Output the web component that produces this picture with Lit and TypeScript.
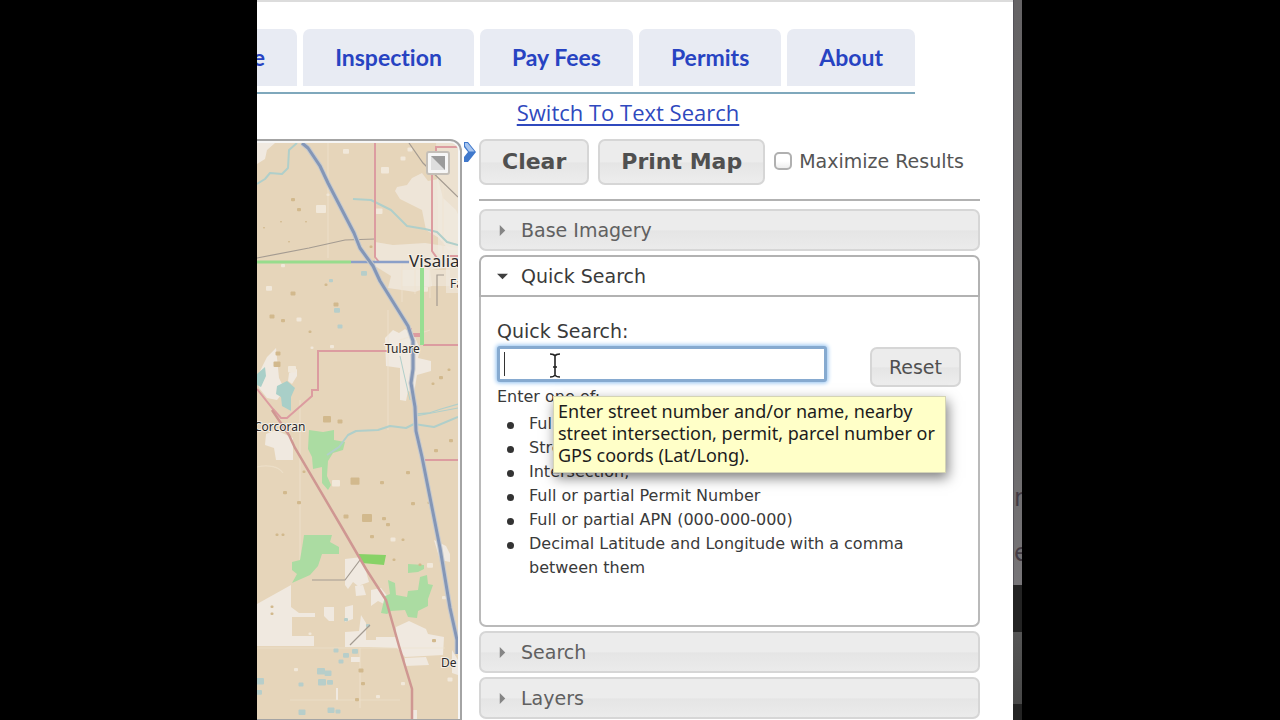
import { LitElement, html, svg, css } from "lit";
import { customElement, property, state } from "lit/decorators.js";

@customElement("county-map")
class CountyMap extends LitElement {
  static styles = css`
    :host {
      display: block;
      box-sizing: border-box;
      border: 2px solid #a4a4a4;
      border-left: 0;
      border-bottom-width: 1px;
      border-top-right-radius: 12px;
      padding: 2px 2px 0 0;
      background: #f6f6f6;
      position: relative;
      overflow: hidden;
    }
    .map {
      display: block;
      width: 100%;
      border-top-right-radius: 8px;
    }
    .label {
      font-family: "Noto Sans", "Open Sans", sans-serif;
      fill: #2c2a2a;
      stroke: #f5efe6;
      stroke-width: 2px;
      paint-order: stroke;
    }
    .big { font-size: 17px; }
    .small { font-size: 12px; }
    .toggle {
      position: absolute;
      top: 10px;
      right: 10px;
      width: 24px;
      height: 24px;
      padding: 0;
      display: grid;
      place-items: center;
      background: #f6f6f6;
      border: 2px solid #c4bfb8;
      border-radius: 3px;
    }
  `;

  private houses = [
    [293, 200, 4], [299, 210, 4], [293, 294, 5], [272, 317, 5], [283, 321, 4], [336, 305, 5], [310, 332, 3],
    [326, 285, 3], [281, 222, 2], [306, 222, 2], [289, 242, 2], [264, 228, 2], [371, 247, 3], [327, 420, 8],
    [340, 422, 5], [304, 472, 3], [355, 482, 9], [382, 483, 4], [408, 473, 4], [285, 493, 4], [299, 503, 4],
    [346, 517, 5], [367, 519, 10], [384, 519, 4], [388, 525, 4], [372, 537, 4], [403, 540, 3], [277, 535, 3],
    [283, 535, 3], [413, 504, 4], [429, 503, 3], [394, 560, 3], [436, 451, 4], [451, 441, 4], [441, 378, 4],
    [449, 370, 3], [433, 384, 3], [361, 671, 5], [363, 684, 4], [357, 700, 4], [272, 607, 3], [272, 614, 3],
    [434, 641, 4], [278, 354, 5], [277, 365, 7], [420, 565, 3],
  ];
  private specks = [
    [346, 152, 6], [321, 210, 10], [379, 212, 7], [385, 171, 8], [403, 159, 5], [328, 195, 3], [269, 289, 6],
    [299, 320, 5], [283, 266, 4], [292, 370, 8], [332, 347, 4], [312, 348, 3], [336, 484, 8], [393, 540, 5],
    [430, 566, 6], [444, 598, 4], [421, 605, 4], [403, 684, 4], [378, 697, 4], [450, 680, 5], [310, 634, 3],
    [296, 670, 4], [410, 150, 5], [425, 290, 6],
  ];
  private ponds = [
    [260, 682, 8], [259, 693, 6], [301, 685, 5], [321, 672, 8], [328, 674, 7], [322, 683, 8], [330, 683, 6],
    [302, 713, 7], [331, 711, 7], [338, 712, 5], [336, 651, 5], [346, 656, 6], [355, 652, 6], [341, 662, 5],
    [368, 626, 4], [346, 620, 4], [337, 311, 6], [340, 327, 5], [331, 281, 4], [364, 274, 6],
  ];

  private dots(items: number[][], fill: string) {
    return items.map(
      ([x, y, s]) => svg`<rect x=${x - s / 2} y=${y - s / 2} width=${s} height=${s * 0.8} rx="1" fill=${fill}></rect>`
    );
  }

  render() {
    return html`
      <svg class="map" viewBox="257 143 201 576" role="img" aria-label="Road map of Tulare County">
        <rect x="257" y="143" width="201" height="576" fill="#e6d5ba"></rect>
        <g fill="#f0e9e0">
          <path d="M257 143h18l-8 7-2 9-8 5z"></path>
          <path d="M397 187l10-2 5-7 10-5 6 8 10-2 5 19 13 12 7 15v25h-14l-10-12-13-8-4-20-12-6-10-5-5-8z" opacity=".8"></path>
          <path d="M436 143h22v150h-12v-34l-8-6v-40z" opacity=".6"></path>
          <path d="M375 242l18 3 32-2 33 5v18l-28 4 2 16-17 6-27-4 3-12-16-10z" opacity=".75"></path>
          <path d="M402 270h48v16h-48z" opacity=".6"></path>
          <path d="M385 338l8-8 6 3 6-4 9 6 6 14-2 9 13 3v10l-14 4-3 18-6-2-2 10-6-1v-32l-14-2z"></path>
          <path d="M257 377l10-20 9-9 3 30 6 12-8 10-10-2-8-10z"></path>
          <path d="M289 373l8-4v7l-5 8-4-3z"></path>
          <path d="M266 434l10-4 17 8v22h-17l-2-12-9-3z"></path>
          <path d="M257 604l34-19v22l8 6h16v4h-23v19h22v10h-57z"></path>
          <path d="M345 559l17-2 7 25-11 4-5-4-5 7-3-4zM355 586l8-1 3 10-10 1zM371 590l10-2 8 10-3 7-8-4-7 5zM324 607h10v14h-5l-5-5zM345 607l8-2v14l-8 3z"></path>
          <path d="M345 632l14-1 2-16 5 8v17h10v-3h20v-10l13-6 17 8 2 5 16 3-1 18-38 2-8-9-28-1h-24z"></path>
          <path d="M405 658l21-1 3 8-24 1zM351 657h9v5h-9zM336 688h2v12h-2zM413 710h4v9h-4z"></path>
          <path d="M434 540l12 6 4 8v8l-10-2zM452 650l6 10v15l-6-2z"></path>
        </g>
        ${this.dots(this.specks, "#f1e8da")}
        <path d="M257 467c12-3 22 0 26 6M328 143v115M316 648h129M300 400v170M360 648v60M388 310v120M402 262v40M415 264v30M430 260v38M443 180v80M290 700h110M257 648h150M400 340l30-10" fill="none" stroke="#f0e4d0" stroke-width="1.2" opacity=".6"></path>
        <g fill="#abdca2">
          <path d="M309 430l14 2 11-2v10l11 2-2 8-10 3-5 8-1 15 4 9-3 5-6-7v-16l-9 2-1-12-4-8z"></path>
          <path d="M304 535h28l-2 7 9 5v7h-17l-4 12-8 9-18 8 5-9-5-4v-8l8-2 3-18z"></path>
          <path d="M388 580l7 3 1 12 11 2 1-6 10-1 2-13 7-2 1 9 5 1-5 14v7l-10 5-1 7-9-1-3-7-14 1-4 3-6-1 4-17 5-2z"></path>
          <path d="M408 564l16 1v4l-6 3-10 1z"></path>
        </g>
        <path d="M358 554l28 1-2 10-22-2z" fill="#88d267"></path>
        <path d="M257 374l8-7 1 9-5 11-4-2zM277 386l10-5 8 7-4 9v14l-9-5-1-9-5-3z" fill="#a9cfc8"></path>
        ${this.dots(this.ponds, "#b7ceca")}
        ${this.dots(this.houses, "#d2b98d")}
        <g fill="none" stroke="#b0cfca" stroke-width="2" stroke-linejoin="round">
          <path d="M297 143l-8 7-1 18-6 6-12-1-5 6-8 5"></path>
          <path d="M353 199l18 1 20 10 16 16 18 3 12 3 10 10 11 3"></path>
          <path d="M327 455l12-8 9-12 8-4 22-1 12-4 16 2 8-4 20 3 24-10"></path>
          <path d="M417 414l12-1 12-4 17-5" stroke-width="1.3"></path>
          <path d="M400 356l4 18 6 26M458 408l-42 8" stroke-width="1"></path>
        </g>
        <path d="M257 258l52-10 36-8 30-1M409 143l14 20 35 34M437 306v-31h7M312 580h33l15-20M350 645l20-20" fill="none" stroke="#a49b91" stroke-width="1.2"></path>
        <g fill="none" stroke="#dc9ca0" stroke-width="2">
          <path d="M375 143v114l4 5M432 175v76l5 7M436 156v-9h22M458 256h-10M411 328v8h11M413 334h10M423 345h35M390 351h-72v39h-6v6l-25 22h-6l-8-9-16-20M424 460h34"></path>
        </g>
        <path d="M272 410l17 25 6 13 46 78 25 43 20 31 13 46 13 43v30" fill="none" stroke="#cf9792" stroke-width="2.5"></path>
        <path d="M257 262h94" stroke="#98dc8d" stroke-width="3"></path>
        <path d="M351 262h58" stroke="#8a9fc8" stroke-width="2.5"></path>
        <path d="M422 268v77" stroke="#98de92" stroke-width="4"></path>
        <g fill="none" stroke-linejoin="round">
          <path d="M302 143l6 5 12 18 8 17 26 50 6 15 13 18 7 15 28 45 5 15v28l-2 14 4 24 1 24 6 26 18 91 10 60 7 32v14" stroke="#c6cacf" stroke-width="5"></path>
          <path d="M302 143l6 5 12 18 8 17 26 50 6 15 13 18 7 15 28 45 5 15v28l-2 14 4 24 1 24 6 26 18 91 10 60 7 32v14" stroke="#8496b6" stroke-width="3"></path>
        </g>
        <text class="label big" x="409" y="267">Visalia</text>
        <text class="label small" x="450" y="288">Fa</text>
        <text class="label small" x="385" y="353">Tulare</text>
        <text class="label small" x="254" y="431">Corcoran</text>
        <text class="label small" x="441" y="667">De</text>
      </svg>
      <button class="toggle" aria-label="Toggle overview map">
        <svg width="16" height="16" viewBox="0 0 16 16">
          <rect x="1" y="1" width="14" height="14" fill="#dedede"></rect>
          <path d="M1 1h14v14z" fill="#9b9b9b"></path>
        </svg>
      </button>
    `;
  }
}

@customElement("accordion-section")
class AccordionSection extends LitElement {
  @property() heading = "";
  @property({ type: Boolean, reflect: true }) open = false;

  static styles = css`
    :host { display: block; }
    .head {
      box-sizing: border-box;
      width: 100%;
      height: 42px;
      display: flex;
      align-items: center;
      gap: 13px;
      padding: 0 16px;
      font: 19px/24px "DejaVu Sans", Verdana, sans-serif;
      color: #606060;
      text-align: left;
      border: 2px solid #d6d6d6;
      border-radius: 7px;
      background: linear-gradient(#ececec 0 50%, #e5e5e5 52%, #ebebeb);
    }
    .arrow { width: 11px; height: 11px; fill: #858585; }
    .open {
      color: #3a3a3a;
      background: #fff;
      border-color: #b2b2b2;
      border-radius: 7px 7px 0 0;
    }
    .open .arrow { fill: #3f3f3f; }
    .body {
      border: 2px solid #bababa;
      border-top: 0;
      border-radius: 0 0 7px 7px;
      padding: 22px 16px 45px;
    }
  `;

  render() {
    return html`
      <button class="head ${this.open ? "open" : ""}" aria-expanded=${this.open} @click=${() => (this.open = !this.open)}>
        <svg class="arrow" viewBox="0 0 12 12">
          <path d=${this.open ? "M0 3h12L6 9z" : "M3 0v12L9 6z"}></path>
        </svg>
        <span>${this.heading}</span>
      </button>
      ${this.open ? html`<div class="body"><slot></slot></div>` : ""}
    `;
  }
}

@customElement("app-root")
class AppRoot extends LitElement {
  @state() private tabs = ["Home", "Inspection", "Pay Fees", "Permits", "About"];

  static styles = css`
    :host {
      display: grid;
      grid-template-columns: 257fr 756fr 9fr 258fr;
      height: 100vh;
      overflow: hidden;
      background: #000;
      font: 19px/24px "DejaVu Sans", Verdana, sans-serif;
      color: #3a3a3a;
    }
    .page {
      grid-column: 2;
      min-width: 0;
      overflow: hidden;
      background: #fff;
      border-top: 2px solid #dcdcdc;
    }
    .behind {
      display: grid;
      grid-template-rows: 585fr 47fr 72fr 16fr;
      font-size: 24px;
      overflow: hidden;
    }
    .upper {
      display: flex;
      flex-direction: column;
      justify-content: flex-end;
      gap: 31px;
      padding-bottom: 20px;
      color: #443c44;
      background: linear-gradient(#656365, #6b696a 70%, #777578);
      border-left: 1px solid #55535a;
    }
    .upper span { height: 24px; white-space: nowrap; }
    .dark { background: #232323; }
    .mid { background: linear-gradient(#555, #484848); }
    .tabs {
      display: flex;
      justify-content: flex-end;
      gap: 6px;
      margin: 27px 98px 0 0;
      padding-bottom: 6px;
      border-bottom: 2px solid #7fa8bc;
    }
    .tab {
      flex: none;
      padding: 13px 32px 14px;
      font: bold 23px/30px Lato, "Trebuchet MS", sans-serif;
      font-variant-ligatures: none;
      color: #2743c2;
      text-decoration: none;
      background: #e8ebf3;
      border-radius: 7px 7px 0 0;
    }
    .switch {
      margin: 2px 14px 11px 0;
      text-align: center;
      font: 22px/32px "Open Sans", "Trebuchet MS", sans-serif;
    }
    .switch a {
      color: #2f49be;
      text-decoration-thickness: 2px;
      text-underline-offset: 3px;
    }
    .main {
      display: grid;
      grid-template-columns: 205fr 17px 501fr;
      padding-right: 33px;
      align-items: start;
    }
    .chevron { width: 14px; height: 22px; margin: 2px 0 0 1px; }
    .panel { display: flex; flex-direction: column; min-width: 0; }
    .tools { display: flex; align-items: center; gap: 9px; }
    .btn {
      flex: none;
      box-sizing: border-box;
      font: bold 22px/24px "DejaVu Sans", Verdana, sans-serif;
      color: #505050;
      height: 46px;
      padding: 0 21px;
      border: 2px solid #d6d6d6;
      border-radius: 7px;
      background: linear-gradient(#ececec 0 50%, #e5e5e5 52%, #ededed);
    }
    .btn.reset { font-weight: normal; font-size: 19px; height: 40px; padding: 0 17px; }
    .max { display: flex; align-items: center; gap: 7px; white-space: nowrap; padding-bottom: 3px; color: #555; }
    .check {
      appearance: none;
      width: 18px;
      height: 18px;
      margin: 1px 0 0;
      border: 2px solid #b0b0b0;
      border-radius: 5px;
      background: linear-gradient(#fff 50%, #eee);
    }
    .rule { width: 100%; height: 2px; margin: 14px 0 8px; border: 0; background: #b2b2b2; }
    .accordion { display: flex; flex-direction: column; gap: 4px; }
    .quick { position: relative; }
    .row { display: flex; justify-content: space-between; align-items: flex-start; margin-right: 1px; }
    .row .btn { margin-top: 4px; }
    .field { flex: 0 1 330px; position: relative; }
    .text {
      display: block;
      box-sizing: border-box;
      width: 100%;
      height: 36px;
      margin-top: 3px;
      padding: 0 5px;
      font: inherit;
      border: 3px solid #86aad0;
      border-radius: 3px;
      box-shadow: 0 0 4px 1px #8fc0f0;
      outline: none;
    }
    .caret { position: absolute; left: 7px; top: 9px; width: 1px; height: 24px; background: #333; }
    .ibeam { position: absolute; left: 52px; top: 9px; width: 12px; height: 27px; }
    .hint, .list { font-size: 16px; line-height: 24px; margin: 0; }
    .hint { margin-top: -2px; }
    .list { padding-left: 32px; list-style: none; margin-top: 3px; }
    .list li { position: relative; }
    .list li::before {
      content: "";
      position: absolute;
      left: -22px;
      top: 10px;
      width: 7px;
      height: 7px;
      border-radius: 50%;
      background: #333;
    }
    .tip {
      position: absolute;
      top: 77px;
      left: 56px;
      right: 16px;
      box-sizing: border-box;
      padding: 3px 0 6px 4px;
      font: 18px/22px "Noto Sans", "Lucida Grande", sans-serif;
      color: #1c1c1c;
      background: #ffffc8;
      border: 1px solid #d4d4b4;
      box-shadow: 2px 5px 12px rgba(0, 0, 0, 0.5);
    }
  `;

  render() {
    return html`
      <div class="page">
        <nav class="tabs">${this.tabs.map((t) => html`<a class="tab" href="#">${t}</a>`)}</nav>
        <div class="switch"><a href="#">Switch To Text Search</a></div>
        <main class="main">
          <county-map></county-map>
          <svg class="chevron" viewBox="0 0 14 22">
            <path d="M1 1h4l8 10-8 10H1v-5l4-5-4-5z" fill="#3f78cc"></path>
            <path d="M2 2h2.500l7 8.500H6L2 5z" fill="#a6c4ee"></path>
          </svg>
          <div class="panel">
            <div class="tools">
              <button class="btn">Clear</button>
              <button class="btn">Print Map</button>
              <label class="max"><input class="check" type="checkbox" />Maximize Results</label>
            </div>
            <hr class="rule" />
            <div class="accordion">
              <accordion-section heading="Base Imagery"></accordion-section>
              <accordion-section heading="Quick Search" open>
                <div class="quick">
                  <label for="q">Quick Search:</label>
                  <div class="row">
                    <div class="field">
                      <input class="text" id="q" type="text" />
                      <span class="caret"></span>
                      <svg class="ibeam" viewBox="0 0 12 27" fill="none">
                        <path d="M1 2q4 0 5 2q1-2 5-2M6 4v19M1 25q4 0 5-2q1 2 5 2M4 15h4" stroke="#222" stroke-width="1.600"></path>
                      </svg>
                    </div>
                    <button class="btn reset">Reset</button>
                  </div>
                  <p class="hint">Enter one of:</p>
                  <ul class="list">
                    <li>Full Address</li>
                    <li>Street</li>
                    <li>Intersection,</li>
                    <li>Full or partial Permit Number</li>
                    <li>Full or partial APN (000-000-000)</li>
                    <li>Decimal Latitude and Longitude with a comma between them</li>
                  </ul>
                  <div class="tip" role="tooltip">
                    Enter street number and/or name, nearby street intersection, permit, parcel number or GPS coords (Lat/Long).
                  </div>
                </div>
              </accordion-section>
              <accordion-section heading="Search"></accordion-section>
              <accordion-section heading="Layers"></accordion-section>
            </div>
          </div>
        </main>
      </div>
      <div class="behind">
        <div class="upper"><span>n</span><span>e</span></div>
        <div class="dark"></div>
        <div class="mid"></div>
        <div class="dark"></div>
      </div>
    `;
  }
}
